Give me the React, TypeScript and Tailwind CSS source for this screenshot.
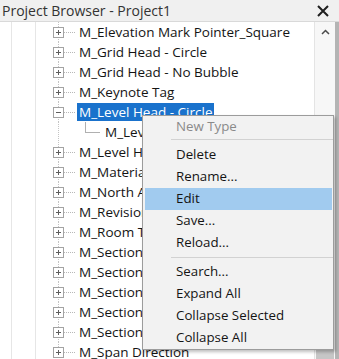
import React from 'react';

type Kind = 'plus' | 'minus' | 'child';

const rows: { label: string; kind: Kind; selected?: boolean }[] = [
  { label: 'M_Elevation Mark Pointer_Square', kind: 'plus' },
  { label: 'M_Grid Head - Circle', kind: 'plus' },
  { label: 'M_Grid Head - No Bubble', kind: 'plus' },
  { label: 'M_Keynote Tag', kind: 'plus' },
  { label: 'M_Level Head - Circle', kind: 'minus', selected: true },
  { label: 'M_Level Head - Circle', kind: 'child' },
  { label: 'M_Level Head - No Bubble', kind: 'plus' },
  { label: 'M_Material Tag', kind: 'plus' },
  { label: 'M_North Arrow', kind: 'plus' },
  { label: 'M_Revision Tag', kind: 'plus' },
  { label: 'M_Room Tag', kind: 'plus' },
  { label: 'M_Section Head - Filled', kind: 'plus' },
  { label: 'M_Section Head - Open', kind: 'plus' },
  { label: 'M_Section Marker', kind: 'plus' },
  { label: 'M_Section Tail - Filled', kind: 'plus' },
  { label: 'M_Section Tail - Open', kind: 'plus' },
  { label: 'M_Span Direction', kind: 'plus' },
];

const menu: ({ label: string; disabled?: boolean; active?: boolean } | 'sep1' | 'sep2')[] = [
  { label: 'New Type', disabled: true },
  'sep1',
  { label: 'Delete' },
  { label: 'Rename...' },
  { label: 'Edit', active: true },
  { label: 'Save...' },
  { label: 'Reload...' },
  'sep2',
  { label: 'Search...' },
  { label: 'Expand All' },
  { label: 'Collapse Selected' },
  { label: 'Collapse All' },
];

// tree connector + expander box
const Connector = ({ kind }: { kind: Kind }) => {
  if (kind === 'child') {
    return (
      <svg width="50" height="20" shapeRendering="crispEdges" className="shrink-0">
        <line x1="5.5" y1="0" x2="5.5" y2="20" stroke="#c4c4c4" strokeDasharray="1 1" />
        <line x1="32.5" y1="0" x2="32.5" y2="10" stroke="#b0b0b0" />
        <line x1="32" y1="10.5" x2="47" y2="10.5" stroke="#b0b0b0" />
      </svg>
    );
  }
  return (
    <svg width="24" height="20" shapeRendering="crispEdges" className="shrink-0">
      <line x1="5.5" y1="0" x2="5.5" y2="5" stroke="#c4c4c4" strokeDasharray="1 1" />
      <line x1="5.5" y1="15" x2="5.5" y2="20" stroke="#c4c4c4" strokeDasharray="1 1" />
      <line x1="11" y1="10.5" x2="23" y2="10.5" stroke="#b8b8b8" strokeDasharray="1 1" />
      <rect x="0.5" y="5.5" width="10" height="10" fill="#fff" stroke="#a3a3a3" />
      <line x1="3" y1="10.5" x2="8" y2="10.5" stroke="#5e5e5e" />
      {kind === 'plus' && <line x1="5.5" y1="8" x2="5.5" y2="13" stroke="#5e5e5e" />}
    </svg>
  );
};

const App: React.FC = () => {
  return (
    <div
      className="relative w-[339px] h-[359px] overflow-hidden bg-white text-[#141414] flex flex-col"
      style={{ fontFamily: '"Open Sans", "Noto Sans", sans-serif' }}
    >
      {/* Title bar */}
      <div className="h-[22px] shrink-0 flex items-center justify-between bg-[#f0f0f0] border-b border-[#d9d9d9] pl-[2px] pr-[10px]">
        <span className="text-[14px] text-[#333] leading-none">Project Browser - Project1</span>
        <svg width="12" height="12" viewBox="0 0 12 12">
          <path d="M1 1 L11 11 M11 1 L1 11" stroke="#1f1f1f" strokeWidth="2" />
        </svg>
      </div>

      <div className="flex flex-1 min-h-0">
        {/* Tree */}
        <div className="flex-1 overflow-hidden">
          {rows.map((r, i) => (
            <div key={i} className="flex h-[20px] items-center pl-[11px] whitespace-nowrap">
              <div className="w-[24px] self-stretch border-l border-[#e6e6e6]" />
              <div className="w-[18px] self-stretch border-l border-[#e6e6e6]" />
              <Connector kind={r.kind} />
              <span
                className={`text-[13.5px] leading-[18px] h-[18px] px-[2px] ${
                  r.selected ? 'bg-[#1a72cc] text-white' : ''
                }`}
              >
                {r.label}
              </span>
            </div>
          ))}
        </div>

        {/* Scrollbar */}
        <div className="w-[21px] shrink-0 bg-[#f7f7f7] border-l border-[#e4e4e4] flex flex-col justify-between items-center">
          <svg width="9" height="6" viewBox="0 0 9 6" className="mt-[7px]">
            <path d="M1 5 L4.5 1.5 L8 5" stroke="#4a4a4a" strokeWidth="1.5" fill="none" />
          </svg>
          <div className="w-[18px] h-[12px] bg-[#c6c6c6]" />
        </div>
        <div className="w-[4px] shrink-0 bg-[#b4b4b4]" />
      </div>

      {/* Context menu */}
      <div className="absolute left-[142px] top-[115px] w-[192px] bg-[#f2f2f2] border border-[#9c9c9c] shadow-[2px_2px_3px_rgba(0,0,0,0.25)]">
        {menu.map((m, i) => {
          if (m === 'sep1' || m === 'sep2') {
            return (
              <div key={i} className={m === 'sep1' ? 'h-[6px] pt-[1px]' : 'h-[7px] pt-[3px]'}>
                <div className="ml-[28px] h-px bg-[#d2d2d2]" />
              </div>
            );
          }
          return (
            <div
              key={i}
              className={`h-[22px] flex items-center pl-[31px] ml-[2px] mr-[1px] text-[13.3px] ${
                m.active ? 'bg-[#a1cbef]' : ''
              } ${m.disabled ? 'text-[#8a8a8a]' : ''}`}
            >
              {m.label}
            </div>
          );
        })}
      </div>
    </div>
  );
};

export default App;
